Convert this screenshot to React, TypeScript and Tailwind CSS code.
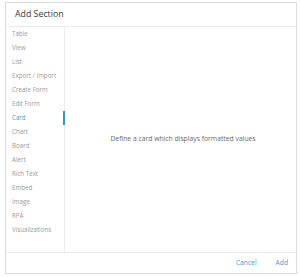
import React from 'react';

const sections = [
  'Table',
  'View',
  'List',
  'Export / Import',
  'Create Form',
  'Edit Form',
  'Card',
  'Chart',
  'Board',
  'Alert',
  'Rich Text',
  'Embed',
  'Image',
  'RPA',
  'Visualizations',
];

const App: React.FC = () => {
  const active = 'Card';

  return (
    <div className="w-[300px] h-[277px] bg-white pt-[2px] pl-[5px] font-['Open_Sans',sans-serif]">
      <div className="w-[292px] h-[272px] border border-[#dcdcdc] flex flex-col bg-white">
        <div className="h-[24px] border-b border-[#ebebeb] flex items-center pl-[9px]">
          <h2 className="text-[8.8px] text-[#3a3a3a] leading-none">Add Section</h2>
        </div>

        <div className="flex-1 flex min-h-0">
          <div className="w-[59px] border-r border-[#ebebeb] flex flex-col">
            {sections.map((name) => (
              <div
                key={name}
                className={
                  name === active
                    ? 'h-[14px] flex items-center pl-[6px] text-[6.2px] text-[#4a98d6] border-r-2 border-[#3b8fd4] -mr-px'
                    : 'h-[14px] flex items-center pl-[6px] text-[6.2px] text-[#9a9a9a]'
                }
              >
                {name}
              </div>
            ))}
          </div>
          <div className="flex-1 flex items-center justify-center">
            <p className="text-[6.8px] text-[#6a6a6a] pl-[5px]">Define a card which displays formatted values</p>
          </div>
        </div>

        <div className="h-[21px] border-t border-[#ebebeb] flex items-center justify-end gap-[19px] pr-[8px]">
          <button className="text-[6.7px] text-[#4a98d6]">Cancel</button>
          <button className="text-[6.7px] text-[#4a98d6]">Add</button>
        </div>
      </div>
    </div>
  );
};

export default App;
